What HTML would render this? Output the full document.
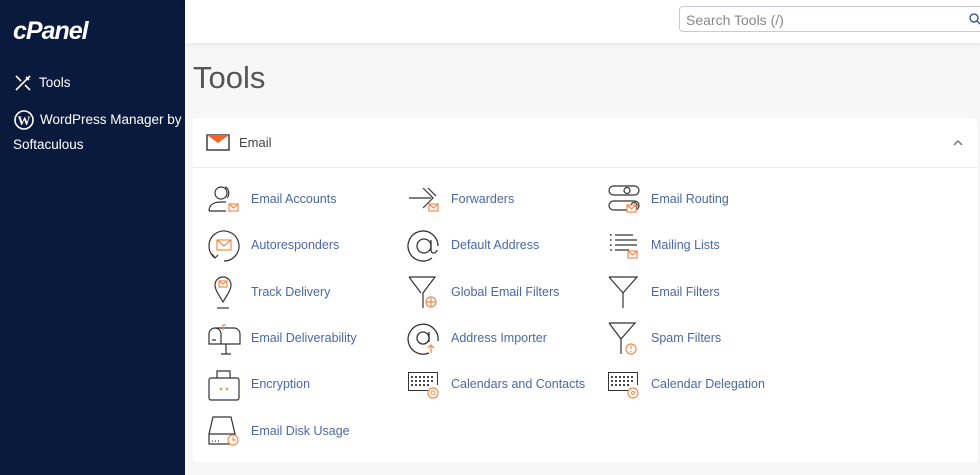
<!DOCTYPE html>
<html><head><style>
*{box-sizing:border-box;margin:0;padding:0}
body{width:980px;height:475px;overflow:hidden;background:#f7f7f7;font-family:"Liberation Sans",sans-serif;position:relative}
.side{position:absolute;left:0;top:0;width:185px;height:475px;background:#0a1a3d;color:#fff}
.logo{position:absolute;left:13px;top:17px;font-size:25px;font-weight:bold;font-style:italic;letter-spacing:-1px;color:#fff}
.nav{position:absolute;left:13px;font-size:13.5px;color:#fff;white-space:nowrap}
.top{position:absolute;left:185px;top:0;width:795px;height:43px;background:#fff;box-shadow:0 2px 4px rgba(0,0,0,.06)}
.search{position:absolute;left:679px;top:6px;width:310px;height:26px;border:1px solid #c3cbdd;border-radius:4px;background:#fff;font-size:14px;color:#888;padding:5px 6px}
h1{position:absolute;left:193px;top:60px;font-weight:normal;font-size:31px;color:#555}
.card{position:absolute;left:193px;top:118px;width:784px;height:344px;background:#fff;border-radius:3px}
.ch{height:50px;border-bottom:1px solid #e8e8e8;position:relative}
.ch span{position:absolute;left:46px;top:17px;font-size:13px;color:#444}
.it{position:absolute;font-size:12.5px;color:#4a68a6}
.ic{position:absolute}
</style></head><body>
<div class="side">
<div class="logo">cPanel</div>
<svg style="position:absolute;left:14px;top:74px" width="18" height="18" viewBox="0 0 18 18" fill="none" stroke="#fff" stroke-width="1.6"><path d="M2 16L16 2M2 2l5 5M11 11l5 5M12 3l3 3"/></svg>
<div class="nav" style="left:39px;top:75px">Tools</div>
<svg style="position:absolute;left:14px;top:110px" width="20" height="20" viewBox="0 0 20 20"><circle cx="10" cy="10" r="9" fill="none" stroke="#fff" stroke-width="1.6"/><text x="10" y="15" font-size="13" font-weight="bold" fill="#fff" text-anchor="middle" font-family="Liberation Serif">W</text></svg>
<div class="nav" style="left:40px;top:112px">WordPress Manager by</div>
<div class="nav" style="left:13px;top:137px">Softaculous</div>
</div>
<div class="top"></div>
<div class="search">Search Tools (/)<svg style="position:absolute;left:289px;top:6px" width="12" height="12" viewBox="0 0 12 12" fill="none" stroke="#3f5e9c" stroke-width="1.5"><circle cx="5" cy="5" r="4"/><path d="M8 8l3 3"/></svg></div>
<h1>Tools</h1>
<div class="card">
<div class="ch">
<svg style="position:absolute;left:13px;top:16px" width="24" height="17" viewBox="0 0 24 17"><rect x="1" y="1" width="22" height="15" fill="#fff" stroke="#333" stroke-width="1.4"/><path d="M1 1h22L12 9z" fill="#f26522"/></svg>
<span>Email</span>
<svg style="position:absolute;left:760px;top:21px" width="10" height="7" viewBox="0 0 10 7" fill="none" stroke="#777" stroke-width="1.5"><path d="M1 6l4-4 4 4"/></svg>
</div>
<svg class="ic" style="left:14px;top:66px" width="34" height="30" viewBox="0 0 34 30" fill="none" stroke="#333" stroke-width="1.2"><circle cx="14" cy="9" r="6"/><path d="M2 27c0-7 6-9 12-9h5M2 27h17M18 3c4 1 5 8 2 11"/><rect x="22" y="20" width="9" height="7" stroke="#f58a4b"/><path d="M22 20l4.5 4 4.5-4" stroke="#f58a4b"/></svg>
<div class="it" style="left:58px;top:74px">Email Accounts</div>
<svg class="ic" style="left:214px;top:66px" width="34" height="30" viewBox="0 0 34 30" fill="none" stroke="#333" stroke-width="1.2"><path d="M2 14h22M16 4l10 10-10 10M21 4l8 8"/><rect x="22" y="20" width="9" height="7" stroke="#f58a4b"/><path d="M22 20l4.5 4 4.5-4" stroke="#f58a4b"/></svg>
<div class="it" style="left:258px;top:74px">Forwarders</div>
<svg class="ic" style="left:414px;top:66px" width="34" height="30" viewBox="0 0 34 30" fill="none" stroke="#333" stroke-width="1.2"><rect x="2" y="2" width="30" height="9" rx="4.5"/><rect x="2" y="17" width="30" height="9" rx="4.5"/><circle cx="20" cy="6.5" r="3"/><circle cx="27" cy="21.5" r="3"/><rect x="20" y="21" width="9" height="7" stroke="#f58a4b" fill="#fff"/><path d="M20 21l4.5 4 4.5-4" stroke="#f58a4b"/></svg>
<div class="it" style="left:458px;top:74px">Email Routing</div>

<svg class="ic" style="left:14px;top:111px" width="34" height="34" viewBox="0 0 34 34" fill="none" stroke="#333" stroke-width="1.2"><path d="M8 29A15 15 0 1 1 17 32"/><path d="M5 25l3 4 3-3"/><rect x="10" y="11" width="14" height="10" stroke="#f58a4b"/><path d="M10 11l7 6 7-6" stroke="#f58a4b"/></svg>
<div class="it" style="left:58px;top:120px">Autoresponders</div>
<svg class="ic" style="left:214px;top:111px" width="34" height="34" viewBox="0 0 34 34" fill="none" stroke="#333" stroke-width="1.3"><path d="M31 17A15 15 0 1 0 25 29"/><circle cx="17" cy="17" r="7"/><path d="M24 11v10c0 4 5 4 6 0"/></svg>
<div class="it" style="left:258px;top:120px">Default Address</div>
<svg class="ic" style="left:414px;top:114px" width="34" height="30" viewBox="0 0 34 30" fill="none" stroke="#333" stroke-width="1.2"><path d="M3 3h2M3 8h2M3 13h2M3 18h2M8 3h18M8 8h22M8 13h22M8 18h14"/><rect x="21" y="19" width="9" height="7" stroke="#f58a4b"/><path d="M21 19l4.5 4 4.5-4" stroke="#f58a4b"/></svg>
<div class="it" style="left:458px;top:120px">Mailing Lists</div>

<svg class="ic" style="left:20px;top:156px" width="24" height="36" viewBox="0 0 24 36" fill="none" stroke="#333" stroke-width="1.2"><path d="M10 28C4 18 2 15 2 11a8 8 0 0 1 16 0c0 4-2 7-8 17z"/><path d="M4 34h12"/><rect x="6" y="7" width="8" height="6" stroke="#f58a4b"/><path d="M6 7l4 3 4-3" stroke="#f58a4b"/></svg>
<div class="it" style="left:58px;top:167px">Track Delivery</div>
<svg class="ic" style="left:214px;top:157px" width="34" height="34" viewBox="0 0 34 34" fill="none" stroke="#333" stroke-width="1.2"><path d="M2 2h26L16 18v15M2 2l12 16"/><circle cx="24" cy="27" r="5" stroke="#f58a4b"/><path d="M19 27h10M24 22v10" stroke="#f58a4b"/></svg>
<div class="it" style="left:258px;top:167px">Global Email Filters</div>
<svg class="ic" style="left:414px;top:157px" width="34" height="34" viewBox="0 0 34 34" fill="none" stroke="#333" stroke-width="1.2"><path d="M2 2h28L16 18v15M2 2l14 16"/></svg>
<div class="it" style="left:458px;top:167px">Email Filters</div>

<svg class="ic" style="left:14px;top:204px" width="34" height="34" viewBox="0 0 34 34" fill="none" stroke="#333" stroke-width="1.2"><path d="M2 22V12a6 6 0 0 1 12 0v10H2zM8 6h19a6 6 0 0 1 6 6v10H14M19 22v10M14 32h10M5 18h4"/><path d="M16 8V3h3" stroke="#f58a4b"/></svg>
<div class="it" style="left:58px;top:213px">Email Deliverability</div>
<svg class="ic" style="left:214px;top:203px" width="34" height="34" viewBox="0 0 34 34" fill="none" stroke="#333" stroke-width="1.3"><path d="M22 32A15 15 0 1 1 31 20"/><circle cx="16" cy="17" r="6"/><path d="M22 11v10"/><path d="M24 32v-8M21 27l3-3 3 3" stroke="#f58a4b"/></svg>
<div class="it" style="left:258px;top:213px">Address Importer</div>
<svg class="ic" style="left:414px;top:203px" width="34" height="34" viewBox="0 0 34 34" fill="none" stroke="#333" stroke-width="1.2"><path d="M2 2h26L14 18v15M2 2l12 16"/><circle cx="24" cy="28" r="5" stroke="#f58a4b"/><path d="M24 25v3M24 30v1" stroke="#f58a4b"/></svg>
<div class="it" style="left:458px;top:213px">Spam Filters</div>

<svg class="ic" style="left:14px;top:250px" width="34" height="34" viewBox="0 0 34 34" fill="none" stroke="#333" stroke-width="1.2"><path d="M10 10V3h13v7"/><rect x="2" y="10" width="30" height="22" rx="2"/><circle cx="14" cy="21" r="1.3" fill="#f58a4b" stroke="none"/><circle cx="20" cy="21" r="1.3" fill="#f58a4b" stroke="none"/></svg>
<div class="it" style="left:58px;top:259px">Encryption</div>
<svg class="ic" style="left:214px;top:252px" width="34" height="30" viewBox="0 0 34 30" fill="#333"><path d="M1 2h30v1H1zM1 20h20v1H1zM1 2h1v19H1zM30 2h1v13h-1z"/><g fill="#444"><rect x="4" y="6" width="2" height="2"/><rect x="8" y="6" width="2" height="2"/><rect x="12" y="6" width="2" height="2"/><rect x="16" y="6" width="2" height="2"/><rect x="20" y="6" width="2" height="2"/><rect x="24" y="6" width="2" height="2"/><rect x="4" y="10" width="2" height="2"/><rect x="8" y="10" width="2" height="2"/><rect x="12" y="10" width="2" height="2"/><rect x="16" y="10" width="2" height="2"/><rect x="20" y="10" width="2" height="2"/><rect x="24" y="10" width="2" height="2"/><rect x="4" y="14" width="2" height="2"/><rect x="8" y="14" width="2" height="2"/><rect x="12" y="14" width="2" height="2"/><rect x="16" y="14" width="2" height="2"/><rect x="20" y="14" width="2" height="2"/></g><circle cx="26" cy="23" r="5" fill="none" stroke="#f58a4b" stroke-width="1.2"/><circle cx="26" cy="23" r="2" fill="none" stroke="#f58a4b"/></svg>
<div class="it" style="left:258px;top:259px">Calendars and Contacts</div>
<svg class="ic" style="left:414px;top:252px" width="34" height="30" viewBox="0 0 34 30" fill="#333"><path d="M1 2h30v1H1zM1 20h20v1H1zM1 2h1v19H1zM30 2h1v13h-1z"/><g fill="#444"><rect x="4" y="6" width="2" height="2"/><rect x="8" y="6" width="2" height="2"/><rect x="12" y="6" width="2" height="2"/><rect x="16" y="6" width="2" height="2"/><rect x="20" y="6" width="2" height="2"/><rect x="24" y="6" width="2" height="2"/><rect x="4" y="10" width="2" height="2"/><rect x="8" y="10" width="2" height="2"/><rect x="12" y="10" width="2" height="2"/><rect x="16" y="10" width="2" height="2"/><rect x="20" y="10" width="2" height="2"/><rect x="24" y="10" width="2" height="2"/><rect x="4" y="14" width="2" height="2"/><rect x="8" y="14" width="2" height="2"/><rect x="12" y="14" width="2" height="2"/><rect x="16" y="14" width="2" height="2"/><rect x="20" y="14" width="2" height="2"/></g><circle cx="26" cy="23" r="5" fill="none" stroke="#f58a4b" stroke-width="1.2"/><circle cx="26" cy="23" r="1.5" fill="none" stroke="#f58a4b"/></svg>
<div class="it" style="left:458px;top:259px">Calendar Delegation</div>

<svg class="ic" style="left:14px;top:296px" width="34" height="34" viewBox="0 0 34 34" fill="none" stroke="#333" stroke-width="1.2"><path d="M2 30V20L6 3h18l4 17v10H2zM2 20h26M5 27h1M8 27h1M11 27h1"/><circle cx="26" cy="26" r="5" stroke="#f58a4b" fill="#fff"/><path d="M26 23v3h3" stroke="#f58a4b"/></svg>
<div class="it" style="left:58px;top:306px">Email Disk Usage</div>
</div>
</body></html>
